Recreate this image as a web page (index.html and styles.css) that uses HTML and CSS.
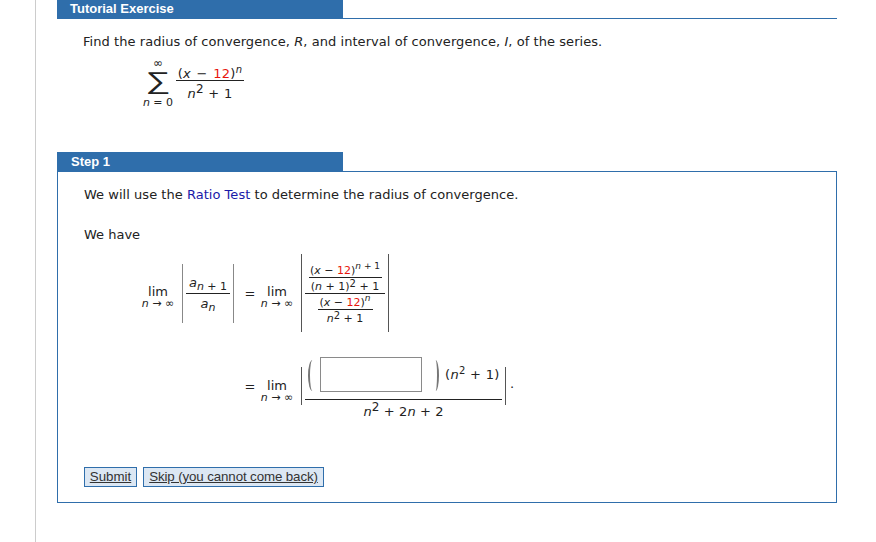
FILE: index.html
```html
<!DOCTYPE html>
<html>
<head>
    <meta charset="UTF-8">
    <title>Tutorial Exercise</title>
    <link rel="stylesheet" href="styles.css">
</head>
<body>
    <div class="page">
        <div class="tab-rule"><div class="tab">Tutorial Exercise</div></div>

        <p class="question">Find the radius of convergence, <i>R</i>, and interval of convergence, <i>I</i>, of the series.</p>

        <div class="series">
            <div class="sigma">
                <span class="sigma-top">∞</span>
                <span class="sigma-sign">∑</span>
                <span class="sigma-bottom"><i>n</i> = 0</span>
            </div>
            <div class="frac series-frac">
                <div class="num">(<i>x</i> − <span class="red">12</span>)<sup><i>n</i></sup></div>
                <div class="den"><i>n</i><sup>2</sup> + 1</div>
            </div>
        </div>

        <div class="step-tab"><div class="tab">Step 1</div></div>
        <div class="step-box">
            <p class="intro">We will use the <a class="link">Ratio Test</a> to determine the radius of convergence.</p>
            <p class="we-have">We have</p>

            <div class="math-row first-row">
                <div class="lim lim-first"><span>lim</span><small><i>n</i> → ∞</small></div>
                <div class="abs abs-small">
                    <div class="frac ratio-frac">
                        <div class="num"><i>a</i><sub><i>n</i> + 1</sub></div>
                        <div class="den"><i>a</i><sub><i>n</i></sub></div>
                    </div>
                </div>
                <span class="equals">=</span>
                <div class="lim"><span>lim</span><small><i>n</i> → ∞</small></div>
                <div class="abs abs-big">
                    <div class="frac outer-frac">
                        <div class="num">
                            <div class="frac inner-frac">
                                <div class="num">(<i>x</i> − <span class="red">12</span>)<sup><i>n</i> + 1</sup></div>
                                <div class="den">(<i>n</i> + 1)<sup>2</sup> + 1</div>
                            </div>
                        </div>
                        <div class="den">
                            <div class="frac inner-frac short">
                                <div class="num">(<i>x</i> − <span class="red">12</span>)<sup><i>n</i></sup></div>
                                <div class="den"><i>n</i><sup>2</sup> + 1</div>
                            </div>
                        </div>
                    </div>
                </div>
            </div>

            <div class="math-row second-row">
                <span class="equals">=</span>
                <div class="lim"><span>lim</span><small><i>n</i> → ∞</small></div>
                <div class="abs abs-wide">
                    <div class="frac wide-frac">
                        <div class="num wide-num">
                            <span class="paren paren-left"></span>
                            <input type="text" class="answer">
                            <span class="paren paren-right"></span>
                            <span class="tail">(<i>n</i><sup>2</sup> + 1)</span>
                        </div>
                        <div class="den wide-den"><i>n</i><sup>2</sup> + 2<i>n</i> + 2</div>
                    </div>
                </div>
                <span class="dot">.</span>
            </div>

            <div class="buttons">
                <button class="submit-btn">Submit</button>
                <button class="skip-btn">Skip (you cannot come back)</button>
            </div>
        </div>
    </div>
</body>
</html>
```

FILE: styles.css
```css
* {
    box-sizing: border-box;
}

html, body {
    height: 100%;
}

body {
    margin: 0;
    background-color: #fff;
    color: #222;
    font-family: "DejaVu Sans", Verdana, sans-serif;
    font-size: 13px;
    overflow: hidden;
}

p {
    margin: 0;
}

.page {
    width: 802px;
    height: 542px;
    margin-left: 35px;
    padding-left: 21px;
    border-left: 1px solid #ccc;
}

.tab-rule {
    height: 19px;
    border-bottom: 1px solid #2f6eab;
}

.tab {
    width: 286px;
    height: 18px;
    padding-left: 13px;
    background-color: #2f6eab;
    color: #fff;
    font-family: "Liberation Sans", Arial, sans-serif;
    font-size: 13px;
    font-weight: bold;
    line-height: 17px;
}

.question {
    margin: 15px 0 0 26px;
    letter-spacing: 0.06px;
    line-height: 16px;
}

.red {
    color: #e8160c;
}

sup, sub {
    font-size: 10px;
    line-height: 0;
}

sup {
    vertical-align: 5px;
}

.den sup {
    font-size: 12px;
}

sub {
    vertical-align: -3px;
}

/* fractions */
.frac {
    display: inline-flex;
    flex-direction: column;
    align-items: stretch;
    text-align: center;
    white-space: nowrap;
}

.frac > .num {
    border-bottom: 1px solid #222;
}

.series {
    display: flex;
    align-items: center;
    height: 50px;
    margin: 8px 0 0 85px;
}

.sigma {
    display: flex;
    flex-direction: column;
    align-items: center;
    width: 32px;
    font-size: 11px;
    line-height: 11px;
    white-space: nowrap;
}

.sigma-top {
    font-size: 12px;
    line-height: 8px;
}

.sigma-sign {
    height: 30px;
    font-family: "Liberation Sans", Arial, sans-serif;
    font-size: 35px;
    line-height: 30px;
    transform: translateY(-1px) scaleY(0.7);
}

.series-frac {
    width: 68px;
    margin: 3px 0 0 2px;
    letter-spacing: 0.3px;
    word-spacing: 1px;
}

.series-frac .num {
    line-height: 13px;
}

.series-frac .den {
    padding-top: 5px;
    line-height: 16px;
    word-spacing: 0;
}

/* step */
.step-tab {
    margin-top: 44px;
}

.step-tab .tab {
    height: 19px;
    padding-left: 14px;
    line-height: 19px;
}

.step-box {
    width: 780px;
    height: 332px;
    padding: 15px 26px 0;
    border: 1px solid #2f6eab;
}

.intro {
    letter-spacing: 0.03px;
    line-height: 16px;
}

.link {
    color: #1a1aa8;
}

.we-have {
    margin-top: 24px;
    line-height: 16px;
}

.math-row {
    display: flex;
    align-items: center;
    font-size: 12px;
}

.first-row {
    height: 78px;
    margin: 11px 0 0 58px;
}

.second-row {
    height: 38px;
    margin: 35px 0 0 160px;
}

.lim {
    display: flex;
    flex-direction: column;
    align-items: center;
    width: 32px;
    margin-top: 9px;
    font-size: 13px;
    line-height: 13px;
}

.first-row .lim {
    margin-top: 7px;
}

.lim small {
    font-size: 11px;
    line-height: 11px;
    white-space: nowrap;
}

.first-row .lim-first {
    margin-right: 8px;
}

.equals {
    width: 12px;
    margin: 0 5px 0 10px;
    font-size: 13px;
    text-align: center;
}

.second-row .equals {
    margin: 0 5px 0 0;
}

/* absolute value bars */
.abs {
    display: flex;
    align-items: center;
    padding: 0 3px;
    border-left: 1px solid #888;
    border-right: 1px solid #888;
}

.abs-small {
    width: 52px;
    height: 59px;
}

.abs-big {
    width: 88px;
    height: 78px;
    margin-left: 8px;
    border-color: #555;
}

.abs-wide {
    width: 205px;
    height: 38px;
    margin-left: 8px;
    align-items: flex-start;
    border-color: #555;
}

.ratio-frac {
    width: 44px;
    font-size: 13px;
    line-height: 16px;
}

.ratio-frac sub {
    font-size: 11px;
}

.ratio-frac .num {
    padding-bottom: 2px;
}

.ratio-frac .den {
    padding-top: 2px;
}

.outer-frac {
    width: 80px;
    font-size: 11px;
}

.inner-frac {
    width: 73px;
    line-height: 13px;
}

.inner-frac .num,
.inner-frac .den {
    padding-top: 2px;
}

.inner-frac sup {
    font-size: 9px;
}

.inner-frac .den sup {
    font-size: 10px;
    vertical-align: 3px;
}

.inner-frac.short {
    width: 55px;
}

.wide-frac {
    width: 197px;
}

.wide-num {
    display: flex;
    align-items: center;
    height: 33px;
    padding-left: 3px;
}

.wide-den {
    height: 0;
    font-size: 13px;
    line-height: 23px;
    letter-spacing: 0.1px;
}

/* tall brackets round the answer box */
.paren {
    flex: none;
    height: 31px;
    margin-top: -16px;
    border-radius: 50%;
}

.paren-left {
    width: 9px;
    border-left: 2px solid #777;
}

.paren-right {
    width: 7px;
    margin-left: 10px;
    border-right: 2px solid #777;
}

.answer {
    flex: none;
    width: 102px;
    height: 35px;
    margin: -17px 0 0 3px;
    border: 1px solid #8a8a8a;
    background-color: #fff;
}

.tail {
    margin: -18px 0 0 6px;
    font-size: 13px;
    letter-spacing: 0.3px;
    white-space: nowrap;
}

.dot {
    margin: -4px 0 0 4px;
    font-size: 13px;
    line-height: 16px;
}

/* buttons */
.buttons {
    display: flex;
    gap: 6px;
    margin-top: 62px;
}

button {
    height: 20px;
    padding: 0;
    border: 1px solid #2f6eab;
    border-radius: 0;
    background-color: #dce7f3;
    color: #333;
    font-family: "Liberation Sans", Arial, sans-serif;
    font-size: 13.33px;
    line-height: 18px;
    text-decoration: underline;
    cursor: pointer;
}

.submit-btn {
    width: 53px;
}

.skip-btn {
    width: 181px;
    letter-spacing: -0.12px;
}
```
